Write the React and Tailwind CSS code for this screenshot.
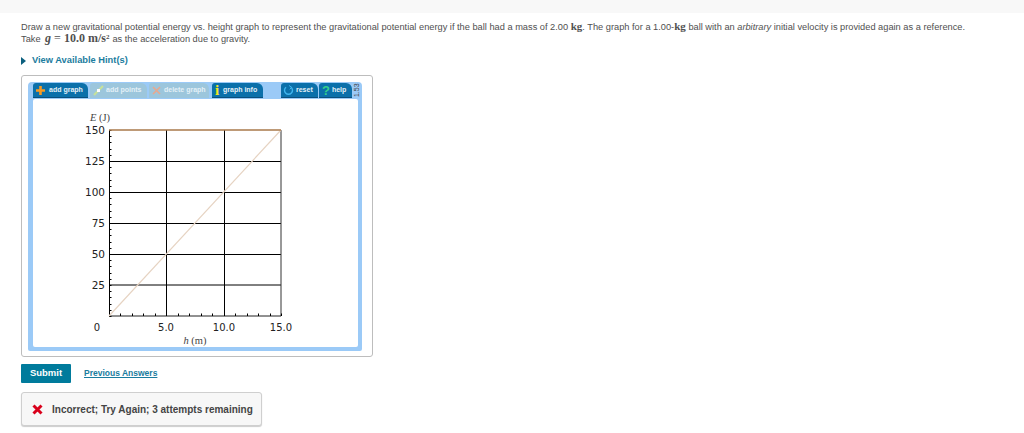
const gridY = [161.5, 192.5, 223.5, 254.5];
const labelsY = [
  ["150", 130],
  ["125", 161],
  ["100", 192],
  ["75", 223],
  ["50", 254],
  ["25", 285],
];

function ToolButton({ icon, label, disabled, width }) {
  return (
    <div
      className={`flex h-[15px] items-center rounded-tl-[3px] rounded-tr-[6px] text-[7px] font-bold ${width} ${
        disabled ? "bg-[#9cc6dc] text-[#e3f0f7]" : "border-b border-[#0a4f7c] bg-[#0b70aa] text-[#e6f1f7]"
      }`}
    >
      {icon}
      <span className="whitespace-nowrap">{label}</span>
    </div>
  );
}

function Plot() {
  const minor = [];
  for (let i = 0; i <= 30; i++) {
    minor.push(Math.round(130 + i * 6.2) + 0.5);
  }
  const minorX = [];
  for (let i = 0; i <= 15; i++) {
    minorX.push(Math.round(109 + i * 11.47) + 0.5);
  }
  return (
    <svg width="325" height="248" viewBox="33 99 325 248" className="block">
      {/* grid */}
      {gridY.map((y) => (
        <line key={y} x1="109" x2="281" y1={y} y2={y} stroke="#000" />
      ))}
      <line x1="109" x2="281" y1="285" y2="285" stroke="#000" />
      <line x1="166.5" x2="166.5" y1="130" y2="316" stroke="#000" />
      <line x1="224.5" x2="224.5" y1="130" y2="316" stroke="#000" />
      <line x1="281" x2="281" y1="130" y2="316" stroke="#333" />
      <line x1="109.5" x2="109.5" y1="130" y2="316" stroke="#000" />
      <line x1="109" x2="281" y1="316" y2="316" stroke="#222" />
      {minor.map((y) => (
        <line key={y} x1="109" x2="111.5" y1={y} y2={y} stroke="#000" />
      ))}
      {minorX.map((x) => (
        <line key={x} x1={x} x2={x} y1="313.5" y2="316" stroke="#000" />
      ))}
      {/* reference line and new graph */}
      <line x1="109" y1="316" x2="281" y2="130" stroke="#e6d3c2" strokeWidth="1.2" />
      <line x1="109" y1="130" x2="281" y2="130" stroke="#a9784a" strokeWidth="1.5" />
      {/* labels */}
      {labelsY.map(([t, y]) => (
        <text key={t} x="105" y={y + 4} textAnchor="end" fontFamily="DejaVu Sans" fontSize="10.5" fill="#222">
          {t}
        </text>
      ))}
      <text x="97" y="331" textAnchor="middle" fontFamily="DejaVu Sans" fontSize="10" fill="#222">0</text>
      <text x="166" y="331" textAnchor="middle" fontFamily="DejaVu Sans" fontSize="10" fill="#222">5.0</text>
      <text x="224" y="331" textAnchor="middle" fontFamily="DejaVu Sans" fontSize="10" fill="#222">10.0</text>
      <text x="281" y="331" textAnchor="middle" fontFamily="DejaVu Sans" fontSize="10" fill="#222">15.0</text>
      <text x="100" y="121" textAnchor="middle" fontFamily="Liberation Serif" fontSize="10.5" fill="#444">
        <tspan fontStyle="italic">E</tspan> (J)
      </text>
      <text x="195" y="344" textAnchor="middle" fontFamily="Liberation Serif" fontSize="10.5" fill="#444">
        <tspan fontStyle="italic">h</tspan> (m)
      </text>
    </svg>
  );
}

export default function App() {
  return (
    <div className="h-[433px] w-[1024px] overflow-hidden bg-white font-['Liberation_Sans',sans-serif] text-[#505050]">
      <div className="h-[13px] bg-[#f8f8f8]" />
      <div className="pl-[21px] pt-[7px]">
        <p className="h-[12px] whitespace-nowrap text-[9.25px] leading-[12px]">
          Draw a new gravitational potential energy vs. height graph to represent the gravitational potential energy if the ball had a mass of 2.00{" "}
          <span className="font-['Liberation_Serif',serif] text-[11px] font-bold">kg</span>. The graph for a 1.00-
          <span className="font-['Liberation_Serif',serif] text-[11px] font-bold">kg</span> ball with an <i>arbitrary</i> initial velocity is provided again as a reference.
        </p>
        <p className="h-[12px] whitespace-nowrap text-[9.25px] leading-[12px]">
          Take <i className="ml-[2px] font-['Liberation_Serif',serif] text-[12px] font-bold">g</i>
          <span className="mx-[3px] font-['Liberation_Serif',serif] text-[12px]">=</span>
          <span className="font-['Liberation_Serif',serif] text-[12px] font-bold">
            10.0 m/s<sup className="text-[7px] leading-[0]">2</sup>
          </span>
          <span className="ml-[3px]">as the acceleration due to gravity.</span>
        </p>

        <div className="mt-[11px] flex h-[12px] items-center gap-[6px] text-[9.3px] font-bold text-[#1a7c9e]">
          <div className="h-0 w-0 border-y-[4px] border-l-[5px] border-y-transparent border-l-[#0b5f7e]" />
          <span>View Available Hint(s)</span>
        </div>

        {/* graph tool */}
        <div className="mt-[8px] h-[282px] w-[352px] rounded-[3px] border border-[#bdbdbd] pl-[6px] pt-[6px]">
          <div className="h-[269px] w-[334px] rounded-t-[4px] rounded-b-[2px] bg-[#9bcaf7] pl-[5px]">
            <div className="flex h-[17px] items-start pt-[1px]">
              <div className="flex">
                <ToolButton
                  width="w-[55px] gap-[3px] pl-[2px]"
                  label="add graph"
                  icon={
                    <svg width="11" height="11" viewBox="0 0 11 11">
                      <path d="M5.5 1V10M1 5.5H10" stroke="#f59a23" strokeWidth="2.6" />
                    </svg>
                  }
                />
                <ToolButton
                  disabled
                  width="ml-[2px] w-[57px] gap-[2px] pl-[3px]"
                  label="add points"
                  icon={
                    <svg width="11" height="11" viewBox="0 0 11 11">
                      <line x1="1" y1="10" x2="10" y2="1" stroke="#c6e29a" strokeWidth="2.2" />
                      <rect x="4" y="4" width="3" height="3" fill="#fff" />
                    </svg>
                  }
                />
                <ToolButton
                  disabled
                  width="ml-[2px] w-[60px] gap-[3px] pl-[3px]"
                  label="delete graph"
                  icon={
                    <svg width="9" height="9" viewBox="0 0 9 9">
                      <path d="M1 1L8 8M8 1L1 8" stroke="#e8a88e" strokeWidth="1.6" />
                    </svg>
                  }
                />
                <ToolButton
                  width="ml-[3px] w-[51px] gap-[3px] pl-[3px]"
                  label="graph info"
                  icon={<span className="w-[5px] font-['Liberation_Serif',serif] text-[15px] font-bold leading-none text-[#f4e81e]">i</span>}
                />
              </div>
              <div className="ml-auto flex">
                <ToolButton
                  width="w-[37px] gap-[2px] pl-[2px]"
                  label="reset"
                  icon={
                    <svg width="11" height="11" viewBox="0 0 11 11" fill="none">
                      <path d="M3 2.2A4 4 0 1 0 8 2.2" stroke="#3fb4ee" strokeWidth="1.4" />
                      <path d="M6 0.5L8.6 2.2L6.8 4.4" stroke="#3fb4ee" strokeWidth="1" />
                    </svg>
                  }
                />
                <ToolButton
                  width="ml-[1px] w-[33px] gap-[2px] pl-[3px]"
                  label="help"
                  icon={<span className="text-[13px] font-bold leading-none text-[#35d08a]">?</span>}
                />
              </div>
              <div className="flex h-[15px] w-[10px] items-center justify-center">
                <span className="-rotate-90 whitespace-nowrap text-[7px] text-[#444]">1.53</span>
              </div>
            </div>
            <div className="w-[325px] rounded-[2px] bg-white">
              <Plot />
            </div>
          </div>
        </div>

        <div className="mt-[7px] flex items-center">
          <button className="h-[19px] w-[50px] rounded-[1px] bg-[#007b9c] text-[9.5px] font-bold text-white">Submit</button>
          <a className="ml-[13px] text-[8.5px] font-bold text-[#1a7c9e] underline">Previous Answers</a>
        </div>

        <div className="mt-[9px] flex h-[34px] w-[241px] items-center rounded-[3px] border border-[#cfcfcf] bg-[#f7f7f7] pl-[10px] pt-[1px] shadow-[0_1px_1px_rgba(0,0,0,0.2)]">
          <svg width="11" height="11" viewBox="0 0 11 11">
            <path d="M1.5 1.5L9.5 9.5M9.5 1.5L1.5 9.5" stroke="#d9001b" strokeWidth="3" />
          </svg>
          <span className="ml-[9px] whitespace-nowrap text-[10px] font-bold text-[#444]">Incorrect; Try Again; 3 attempts remaining</span>
        </div>
      </div>
    </div>
  );
}
